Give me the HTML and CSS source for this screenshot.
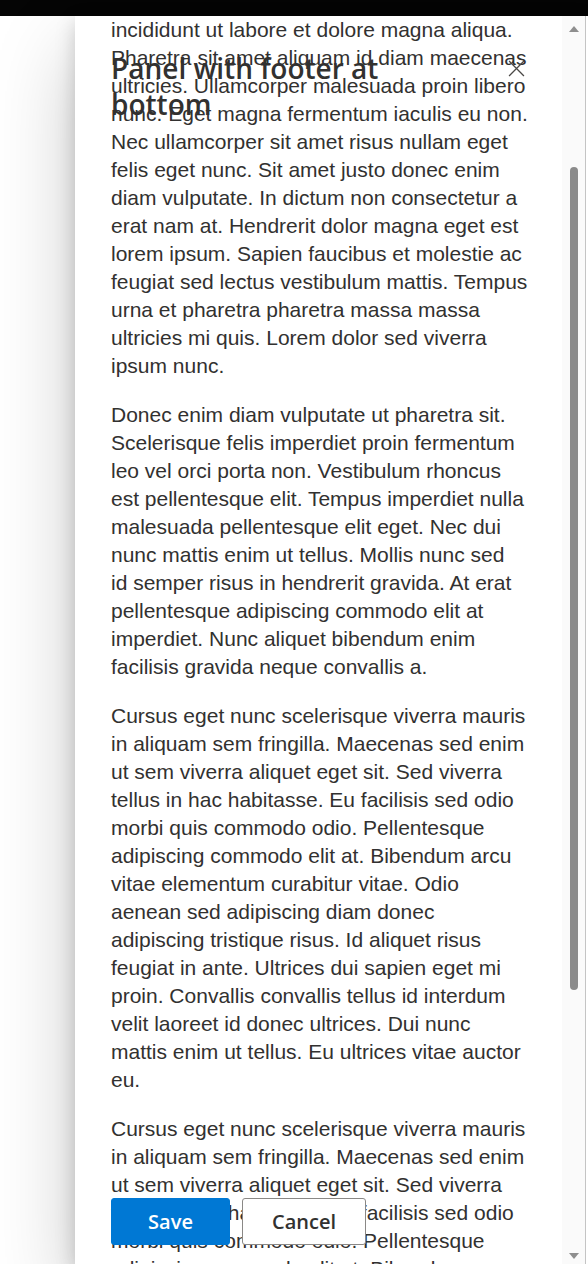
FILE: index.html
```html
<!DOCTYPE html>
<html lang="en">
<head>
<meta charset="utf-8">
<title>Panel with footer at bottom</title>
<link rel="stylesheet" href="styles.css">
</head>
<body>
<div class="topbar"></div>
<div class="stage">
  <div class="backdrop"></div>
  <aside class="panel">
    <div class="panel-main">
      <div class="panel-body">
        <p>incididunt ut labore et dolore magna aliqua. Pharetra sit amet aliquam id diam maecenas ultricies. Ullamcorper malesuada proin libero nunc. Eget magna fermentum iaculis eu non. Nec ullamcorper sit amet risus nullam eget felis eget nunc. Sit amet justo donec enim diam vulputate. In dictum non consectetur a erat nam at. Hendrerit dolor magna eget est lorem ipsum. Sapien faucibus et molestie ac feugiat sed lectus vestibulum mattis. Tempus urna et pharetra pharetra massa massa ultricies mi quis. Lorem dolor sed viverra ipsum nunc.</p>
        <p>Donec enim diam vulputate ut pharetra sit. Scelerisque felis imperdiet proin fermentum leo vel orci porta non. Vestibulum rhoncus est pellentesque elit. Tempus imperdiet nulla malesuada pellentesque elit eget. Nec dui nunc mattis enim ut tellus. Mollis nunc sed id&nbsp;semper risus in hendrerit gravida. At erat pellentesque adipiscing commodo elit at imperdiet. Nunc aliquet bibendum enim facilisis gravida neque convallis a.</p>
        <p>Cursus eget nunc scelerisque viverra mauris in aliquam sem fringilla. Maecenas sed enim ut sem viverra aliquet eget sit. Sed viverra tellus in hac habitasse. Eu facilisis sed odio morbi quis commodo odio. Pellentesque adipiscing commodo elit at. Bibendum arcu vitae elementum curabitur vitae. Odio aenean sed adipiscing diam donec adipiscing tristique risus. Id aliquet risus feugiat in ante. Ultrices dui sapien eget mi proin. Convallis convallis tellus id interdum velit laoreet id donec ultrices. Dui nunc mattis enim ut tellus. Eu ultrices vitae auctor eu.</p>
        <p>Cursus eget nunc scelerisque viverra mauris in aliquam sem fringilla. Maecenas sed enim ut sem viverra aliquet eget sit. Sed viverra tellus in hac habitasse. Eu facilisis sed odio morbi quis commodo odio. Pellentesque adipiscing commodo elit at. Bibendum arcu vitae elementum curabitur vitae. Odio aenean sed adipiscing diam donec adipiscing tristique risus.</p>
      </div>
      <div class="panel-header">
        <h1 class="panel-title">Panel with footer at bottom</h1>
        <button class="close-btn" aria-label="Close">
          <svg viewBox="0 0 16 16" width="17" height="17"><path d="M1 1L15 15M15 1L1 15" stroke="#4a4846" stroke-width="1.2" fill="none"/></svg>
        </button>
      </div>
      <div class="panel-footer">
        <button class="btn btn-primary">Save</button>
        <button class="btn btn-default">Cancel</button>
      </div>
    </div>
    <div class="scrollbar" aria-hidden="true">
      <span class="sb-arrow sb-up"></span>
      <span class="sb-thumb"></span>
      <span class="sb-arrow sb-down"></span>
    </div>
    <div class="edge"></div>
  </aside>
</div>
</body>
</html>
```

FILE: styles.css
```css
html, body {
  margin: 0;
  padding: 0;
  height: 1264px;
  overflow: hidden;
  background: #ffffff;
  font-family: "Open Sans", "Noto Sans", sans-serif;
  color: #323130;
}

.topbar {
  height: 16px;
  background: #050505;
}

.stage {
  display: flex;
  height: 1248px;
}

.backdrop {
  flex: 0 0 75px;
  background: #ffffff;
}

.panel {
  position: relative;
  flex: 1;
  display: flex;
  background: #ffffff;
  box-shadow: 0 34px 77px rgba(0, 0, 0, 0.22), 0 6px 19px rgba(0, 0, 0, 0.18);
}

.panel-main {
  position: relative;
  flex: 1;
  overflow: hidden;
}

.panel-body {
  padding: 0 32px 0 36px;
  font-family: "Liberation Sans", Arial, sans-serif;
  font-size: 21px;
  line-height: 28px;
}

.panel-body p {
  margin: 0 0 21px 0;
}

.panel-header {
  position: absolute;
  top: 0;
  left: 0;
  right: 0;
  display: flex;
  align-items: flex-start;
  padding: 34px 24px 0 36px;
}

.panel-title {
  margin: 0;
  max-width: 300px;
  font-size: 28px;
  line-height: 36px;
  font-weight: 600;
  color: #323130;
}

.close-btn {
  margin-left: auto;
  width: 44px;
  height: 36px;
  border: 0;
  padding: 0;
  background: transparent;
  display: flex;
  align-items: center;
  justify-content: center;
}

.panel-footer {
  position: absolute;
  left: 36px;
  bottom: 19px;
  display: flex;
  gap: 12px;
}

.btn {
  height: 47px;
  box-sizing: border-box;
  border-radius: 3px;
  font-family: "Open Sans", "Noto Sans", sans-serif;
  font-size: 20px;
  font-weight: 600;
  padding: 0 12px;
}

.btn-primary {
  width: 119px;
  background: #0078d4;
  border: 1px solid #0078d4;
  color: #ffffff;
}

.btn-default {
  width: 124px;
  background: #ffffff;
  border: 1px solid #8a8886;
  color: #323130;
}

.scrollbar {
  flex: 0 0 23px;
  display: flex;
  flex-direction: column;
  align-items: center;
  background: #fafafa;
}

.sb-arrow {
  width: 0;
  height: 0;
  border-left: 5px solid transparent;
  border-right: 5px solid transparent;
}

.sb-up {
  margin-top: 10px;
  border-bottom: 6px solid #8e8e8e;
}

.sb-thumb {
  margin-top: 135px;
  width: 8px;
  height: 823px;
  border-radius: 4px;
  background: #8b8b8b;
}

.sb-down {
  margin-top: auto;
  margin-bottom: 5px;
  border-top: 6px solid #8e8e8e;
}

.edge {
  flex: 0 0 1px;
  margin-right: 2px;
  background: #c4c4c4;
}
```
